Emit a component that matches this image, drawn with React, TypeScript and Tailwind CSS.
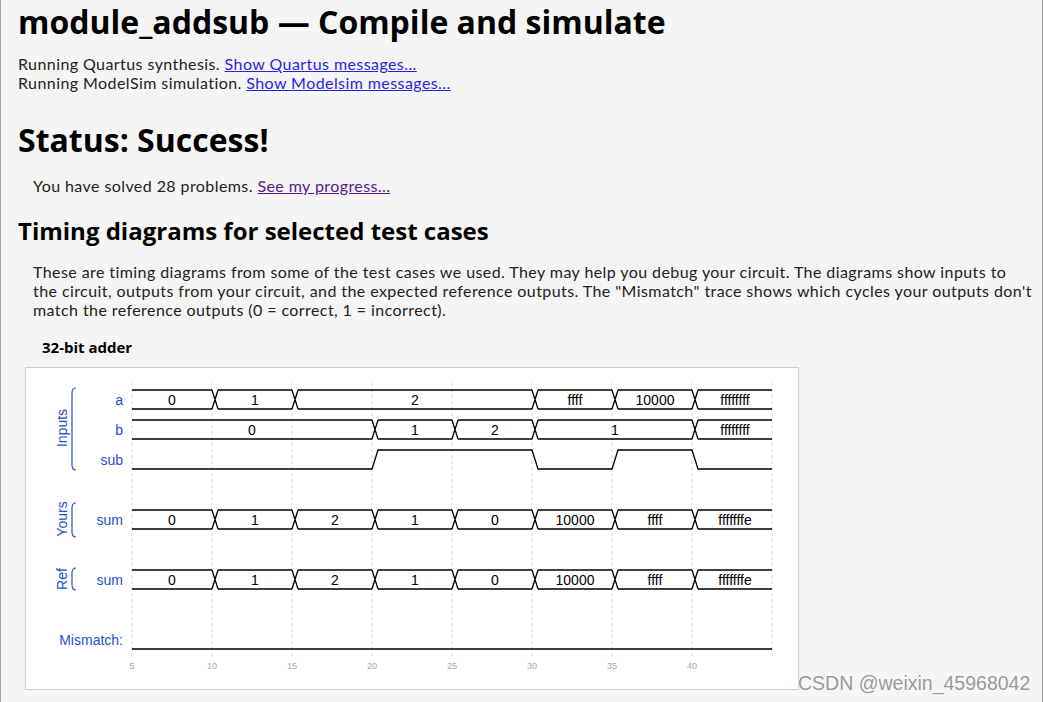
import React from "react";

const X0 = 132;
const XE = 772;
const tx = (t: number) => X0 + (t - 5) * 16;

type Seg = { t0: number; t1: number; v: string };

function Bus({ yc, segs }: { yc: number; segs: Seg[] }) {
  const yt = yc - 10;
  const yb = yc + 9;
  const parts: string[] = [];
  const texts: React.ReactNode[] = [];
  segs.forEach((s, i) => {
    const start = i === 0 ? tx(s.t0) : tx(s.t0) + 6;
    const end = i === segs.length - 1 ? XE : tx(s.t1);
    parts.push(`M${start} ${yt} L${end} ${yt}`);
    parts.push(`M${start} ${yb} L${end} ${yb}`);
    if (i < segs.length - 1) {
      const T = tx(s.t1);
      parts.push(`M${T} ${yt} L${T + 6} ${yb}`);
      parts.push(`M${T} ${yb} L${T + 6} ${yt}`);
    }
    texts.push(
      <text key={i} x={(start + end) / 2} y={yc + 5} textAnchor="middle" fontSize="14" fill="#000">
        {s.v}
      </text>
    );
  });
  return (
    <g>
      <path d={parts.join(" ")} stroke="#000" strokeWidth="1.3" fill="none" />
      {texts}
    </g>
  );
}

const sums: Seg[] = ["0", "1", "2", "1", "0", "10000", "ffff", "fffffffe"].map((v, i) => ({
  t0: 5 + i * 5,
  t1: 10 + i * 5,
  v,
}));

function Brace({ x, y0, y1 }: { x: number; y0: number; y1: number }) {
  return (
    <path
      d={`M${x + 4} ${y0} Q${x} ${y0} ${x} ${y0 + 5} L${x} ${y1 - 5} Q${x} ${y1} ${x + 4} ${y1}`}
      stroke="#2550d0"
      strokeWidth="1.2"
      fill="none"
    />
  );
}

function Diagram() {
  const blue = "#2550d0";
  const grid = [5, 10, 15, 20, 25, 30, 35, 40, 45];
  return (
    <svg width="772" height="321" viewBox="26 368 772 321" className="font-['Liberation_Sans',Arial,sans-serif]">
      {grid.map((t) => (
        <line key={t} x1={tx(t)} x2={tx(t)} y1={383} y2={656} stroke="#d8d8d8" strokeDasharray="3 3" strokeWidth="1" />
      ))}
      {grid.slice(0, 8).map((t) => (
        <text key={t} x={tx(t)} y={669} textAnchor="middle" fontSize="9" fill="#aaa">
          {t}
        </text>
      ))}

      <text x={62} y={428} transform="rotate(-90 62 428)" textAnchor="middle" dominantBaseline="central" fontSize="14" fill={blue}>Inputs</text>
      <Brace x={72} y0={388} y1={470} />
      <text x={62} y={519} transform="rotate(-90 62 519)" textAnchor="middle" dominantBaseline="central" fontSize="14" fill={blue}>Yours</text>
      <Brace x={72} y0={503} y1={537} />
      <text x={62} y={579} transform="rotate(-90 62 579)" textAnchor="middle" dominantBaseline="central" fontSize="14" fill={blue}>Ref</text>
      <Brace x={72} y0={568} y1={590} />

      <text x={123} y={405} textAnchor="end" fontSize="14" fill={blue}>a</text>
      <text x={123} y={435} textAnchor="end" fontSize="14" fill={blue}>b</text>
      <text x={123} y={465} textAnchor="end" fontSize="14" fill={blue}>sub</text>
      <text x={123} y={525} textAnchor="end" fontSize="14" fill={blue}>sum</text>
      <text x={123} y={585} textAnchor="end" fontSize="14" fill={blue}>sum</text>
      <text x={123} y={645} textAnchor="end" fontSize="14" fill={blue}>Mismatch:</text>

      <Bus
        yc={400}
        segs={[
          { t0: 5, t1: 10, v: "0" },
          { t0: 10, t1: 15, v: "1" },
          { t0: 15, t1: 30, v: "2" },
          { t0: 30, t1: 35, v: "ffff" },
          { t0: 35, t1: 40, v: "10000" },
          { t0: 40, t1: 45, v: "ffffffff" },
        ]}
      />
      <Bus
        yc={430}
        segs={[
          { t0: 5, t1: 20, v: "0" },
          { t0: 20, t1: 25, v: "1" },
          { t0: 25, t1: 30, v: "2" },
          { t0: 30, t1: 40, v: "1" },
          { t0: 40, t1: 45, v: "ffffffff" },
        ]}
      />
      <path
        d="M132 469 L372 469 L378 450 L532 450 L538 469 L612 469 L618 450 L692 450 L698 469 L772 469"
        stroke="#000"
        strokeWidth="1.3"
        fill="none"
      />
      <Bus yc={520} segs={sums} />
      <Bus yc={580} segs={sums} />
      <path d="M132 649 L772 649" stroke="#000" strokeWidth="1.3" fill="none" />
    </svg>
  );
}

export default function App() {
  const body = "font-['Lato','Noto_Sans',sans-serif] text-[16px] leading-[19px] tracking-[0.42px]";
  const head = "font-['Open_Sans','Noto_Sans',sans-serif] font-bold text-black";
  return (
    <div className="relative h-[702px] w-[1043px] overflow-hidden border-l border-r border-[#a0a0a0] bg-[#f5f5f5] text-[#222]">
      <div className="flex flex-col items-start pl-[17px]">
        <h1 className={`mt-[3px] text-[32px] leading-[38px] ${head}`}>module_addsub — Compile and simulate</h1>
        <div className={`mt-[13px] ${body}`}>
          <div>
            Running Quartus synthesis. <a className="text-[#2a1fe6] underline">Show Quartus messages...</a>
          </div>
          <div>
            Running ModelSim simulation. <a className="text-[#2a1fe6] underline">Show Modelsim messages...</a>
          </div>
        </div>
        <h2 className={`mt-[28px] text-[32px] leading-[40px] ${head}`}>Status: Success!</h2>
        <div className={`ml-[15px] mt-[16px] ${body}`}>
          You have solved 28 problems. <a className="text-[#551a8b] underline">See my progress...</a>
        </div>
        <h2 className={`mt-[21px] text-[24px] leading-[30px] ${head}`}>Timing diagrams for selected test cases</h2>
        <div className={`ml-[15px] mt-[16px] whitespace-nowrap ${body}`}>
          <div>
            These are timing diagrams from some of the test cases we used. They may help you debug your circuit. The diagrams show inputs to
          </div>
          <div>
            the circuit, outputs from your circuit, and the expected reference outputs. The "Mismatch" trace shows which cycles your outputs don't
          </div>
          <div>match the reference outputs (0 = correct, 1 = incorrect).</div>
        </div>
        <div className={`ml-[24px] mt-[18px] text-[15px] leading-[20px] ${head}`}>32-bit adder</div>
        <div className="ml-[7px] mt-[10px] h-[323px] w-[774px] border border-[#cccccc] bg-white">
          <Diagram />
        </div>
      </div>
      <div className="absolute left-[797px] top-[671px] font-['Liberation_Sans',Arial,sans-serif] text-[19.5px] leading-[24px] text-[#999] [text-shadow:0_0_2px_#fff]">
        CSDN @weixin_45968042
      </div>
    </div>
  );
}
